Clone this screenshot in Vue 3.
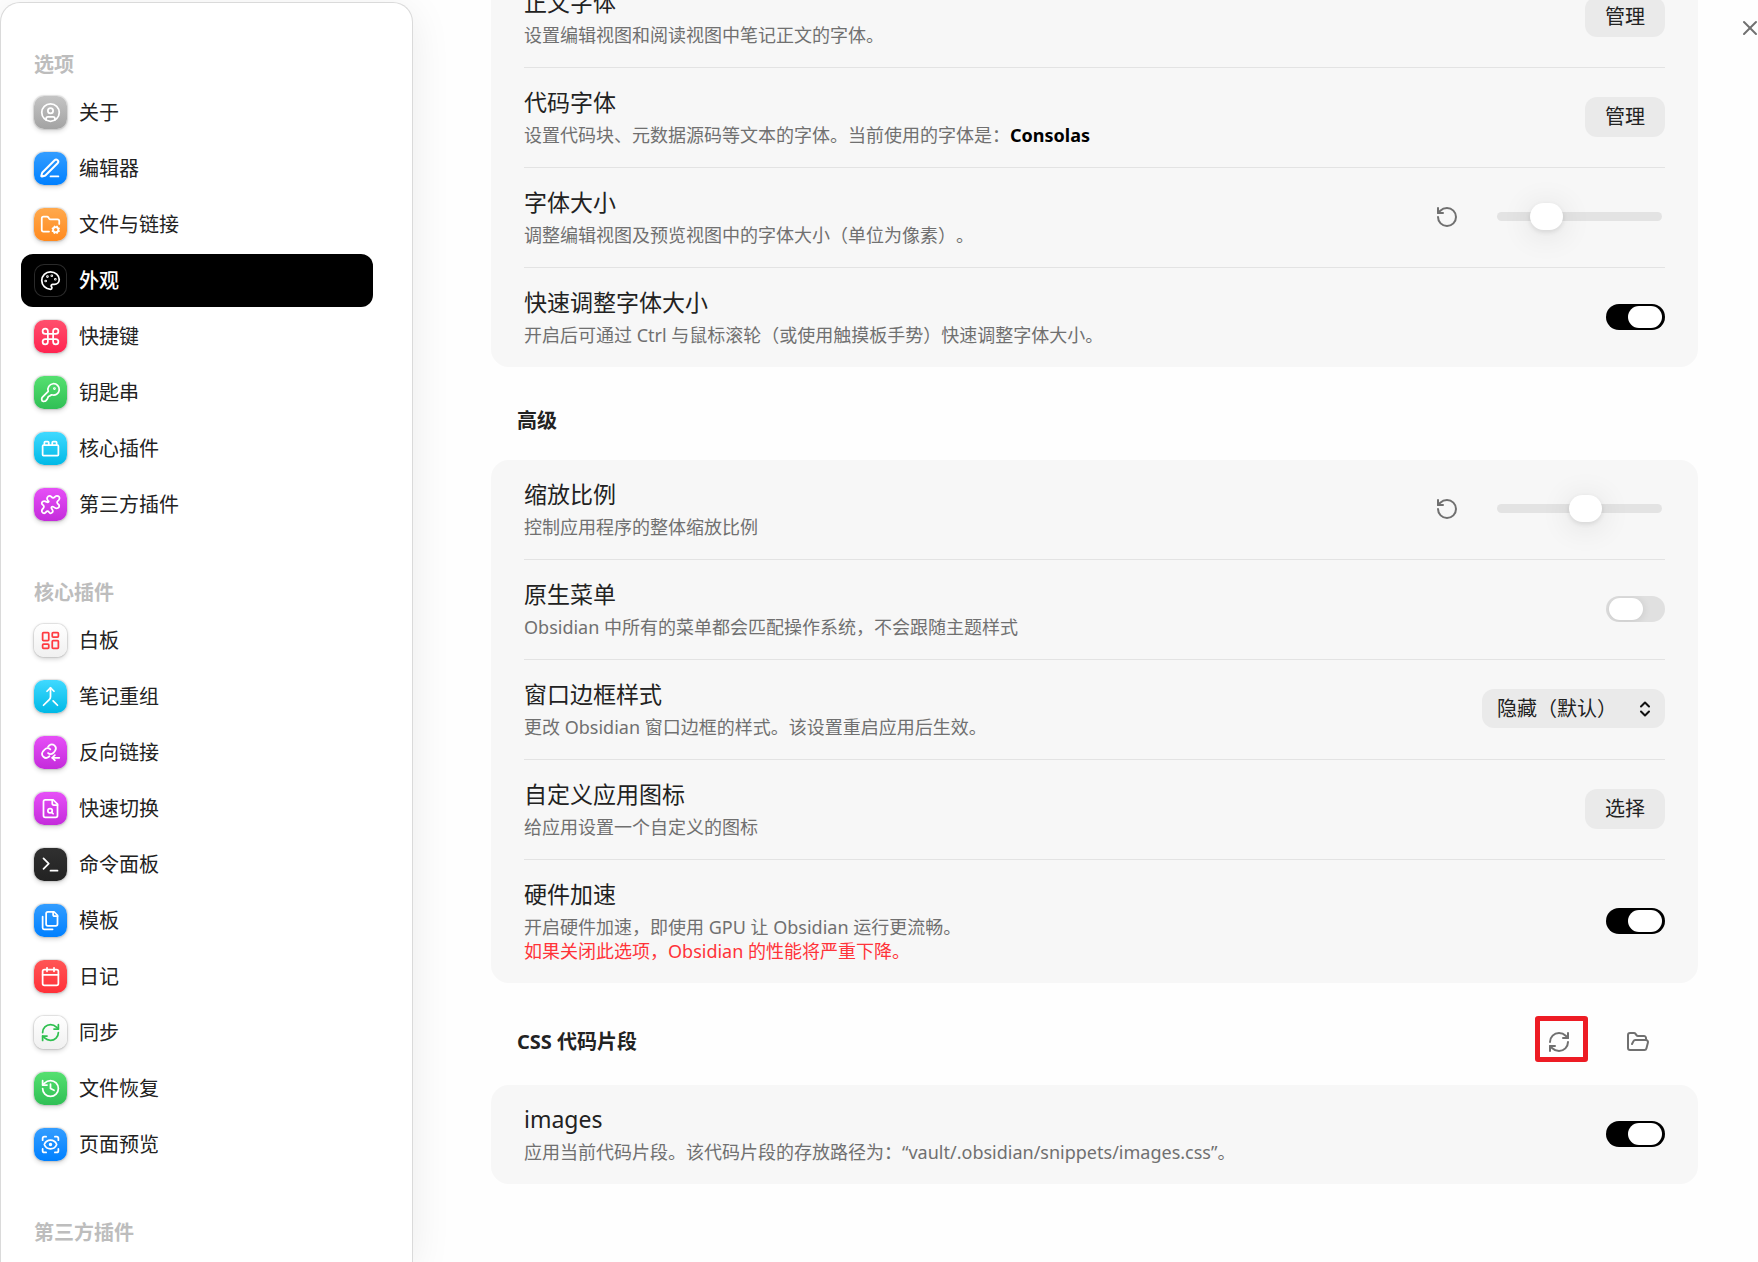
<script setup>
import { ref } from 'vue'

const icons = {
  user: '<circle cx="12" cy="12" r="10"/><circle cx="12" cy="10" r="3"/><path d="M7 20.662V19a2 2 0 0 1 2-2h6a2 2 0 0 1 2 2v1.662"/>',
  pen: '<path d="M12 21h9"/><path d="M16.376 3.622a1 1 0 0 1 3.002 3.002L7.368 18.635a2 2 0 0 1-.855.506l-2.872.838a.5.5 0 0 1-.62-.62l.838-2.872a2 2 0 0 1 .506-.854z" transform="translate(-2 -1.6) scale(1.14)"/>',
  folderCog: '<path d="M10.3 20H4a2 2 0 0 1-2-2V5a2 2 0 0 1 2-2h3.98a2 2 0 0 1 1.69.9l.66 1.2A2 2 0 0 0 12 6h8a2 2 0 0 1 2 2v3.3"/><circle cx="18" cy="18" r="3"/><path d="m14.305 19.53.923-.382M15.228 16.852l-.923-.383M16.852 15.228l-.383-.923M16.852 20.772l-.383.924M19.148 15.228l.383-.923M19.53 21.696l-.382-.924M20.772 16.852l.924-.383M20.772 19.148l.924.383"/>',
  palette: '<circle cx="13.5" cy="6.5" r=".5"/><circle cx="17.5" cy="10.5" r=".5"/><circle cx="8.5" cy="7.5" r=".5"/><circle cx="6.5" cy="12.5" r=".5"/><path d="M12 2C6.5 2 2 6.5 2 12s4.5 10 10 10c.926 0 1.648-.746 1.648-1.688 0-.437-.18-.835-.437-1.125-.29-.289-.438-.652-.438-1.125a1.64 1.64 0 0 1 1.668-1.668h1.996c3.051 0 5.555-2.503 5.555-5.554C21.965 6.012 17.461 2 12 2z"/>',
  command: '<path d="M15 6v12a3 3 0 1 0 3-3H6a3 3 0 1 0 3 3V6a3 3 0 1 0-3 3h12a3 3 0 1 0-3-3"/>',
  key: '<path d="M9.4 10.6 2.8 17.2A2.6 2.6 0 0 0 2 19v1.4A1.6 1.6 0 0 0 3.6 22H5a2.6 2.6 0 0 0 1.8-.8l1.4-1.6c.8-.9.6-1.9 1.2-2.6.7-.9 1.9-.9 2.7-1.7l1.3-.7a6.5 6.5 0 1 0-4-4z"/><circle cx="16.5" cy="7.5" r=".6"/>',
  brick: '<rect x="3" y="8" width="18" height="12" rx="1"/><path d="M10 8V5c0-.6-.4-1-1-1H6a1 1 0 0 0-1 1v3"/><path d="M19 8V5c0-.6-.4-1-1-1h-3a1 1 0 0 0-1 1v3"/>',
  puzzle: '<path d="M9 7.5C6.8 4.8 9 2 11 2s2.2 2.4 4 2.4S17.3 2 19.3 2 23 3.8 22 6s-3 2-2.4 4 2.4 1.6 2.4 3.6-2.6 3.4-4.6 2.4-2.6-2.6-4-1.2.8 2.6 1.2 4.2S13.6 22 12 22s-1.6-2.4-3.4-2.4S6.8 22 4.8 22 1.4 20 2.4 18s2.4-2 2-4S2 12.4 2 10.6 4 7.6 6 8.4s2.6 1.6 3.6.8 0-1-.6-1.7z"/>',
  dashboard: '<rect width="7" height="9" x="3" y="3" rx="1"/><rect width="7" height="5" x="14" y="3" rx="1"/><rect width="7" height="9" x="14" y="12" rx="1"/><rect width="7" height="5" x="3" y="16" rx="1"/>',
  merge: '<path d="m8 6 4-4 4 4"/><path d="M12 2v10.3a4 4 0 0 1-1.172 2.872L4 22"/><path d="m20 22-5-5"/>',
  backlink: '<path d="M9.2 12.6a4.4 4.4 0 0 0 6.4-.4l1.8-2.4a4.6 4.6 0 0 0-6.8-6L9.2 5.4"/><path d="M11.8 8.4a4.4 4.4 0 0 0-6.4.2l-2.2 2.4a4.6 4.6 0 0 0 6.6 6.2l1-1"/><path d="M22 18h-8"/><path d="m17 15-3 3 3 3"/>',
  fileSearch: '<path d="M15 2H6a2 2 0 0 0-2 2v16a2 2 0 0 0 2 2h12a2 2 0 0 0 2-2V7Z"/><path d="M14 2v4a2 2 0 0 0 2 2h4"/><circle cx="11.5" cy="14.5" r="2.5"/><path d="M13.3 16.3 15 18"/>',
  terminal: '<path d="m4 17 6-6-6-6"/><path d="M12 19h8"/>',
  files: '<path d="M20 7h-3a2 2 0 0 1-2-2V2"/><path d="M9 18a2 2 0 0 1-2-2V4a2 2 0 0 1 2-2h7l4 4v10a2 2 0 0 1-2 2Z"/><path d="M3 7.6v12.8A1.6 1.6 0 0 0 4.6 22h9.8"/>',
  calendar: '<rect width="18" height="18" x="3" y="4" rx="2"/><path d="M8 2v4"/><path d="M16 2v4"/><path d="M3 10h18"/>',
  refresh: '<path d="M3 12a9 9 0 0 1 9-9 9.75 9.75 0 0 1 6.74 2.74L21 8"/><path d="M21 3v5h-5"/><path d="M21 12a9 9 0 0 1-9 9 9.75 9.75 0 0 1-6.74-2.74L3 16"/><path d="M8 16H3v5"/>',
  history: '<path d="M3 12a9 9 0 1 0 9-9 9.75 9.75 0 0 0-6.74 2.74L3 8"/><path d="M3 3v5h5"/><path d="M12 7v5l4 2"/>',
  scanEye: '<path d="M3 7V5a2 2 0 0 1 2-2h2"/><path d="M17 3h2a2 2 0 0 1 2 2v2"/><path d="M21 17v2a2 2 0 0 1-2 2h-2"/><path d="M7 21H5a2 2 0 0 1-2-2v-2"/><circle cx="12" cy="12" r="1"/><path d="M18.944 12.33a1 1 0 0 0 0-.66 7.5 7.5 0 0 0-13.888 0 1 1 0 0 0 0 .66 7.5 7.5 0 0 0 13.888 0"/>',
  reset: '<path d="M3 12a9 9 0 1 0 9-9 9.75 9.75 0 0 0-6.74 2.74L3 8"/><path d="M3 3v5h5"/>',
  folderOpen: '<path d="m6 14 1.5-2.9A2 2 0 0 1 9.24 10H20a2 2 0 0 1 1.94 2.5l-1.54 6a2 2 0 0 1-1.95 1.5H4a2 2 0 0 1-2-2V5a2 2 0 0 1 2-2h3.9a2 2 0 0 1 1.69.9l.81 1.2a2 2 0 0 0 1.67.9H18a2 2 0 0 1 2 2v2"/>',
  close: '<path d="M18 6 6 18"/><path d="m6 6 12 12"/>',
}

const groups = [
  {
    title: '选项',
    items: [
      { label: '关于', icon: 'user', tone: 'gray' },
      { label: '编辑器', icon: 'pen', tone: 'blue' },
      { label: '文件与链接', icon: 'folderCog', tone: 'orange' },
      { label: '外观', icon: 'palette', tone: 'black' },
      { label: '快捷键', icon: 'command', tone: 'pink' },
      { label: '钥匙串', icon: 'key', tone: 'green' },
      { label: '核心插件', icon: 'brick', tone: 'cyan' },
      { label: '第三方插件', icon: 'puzzle', tone: 'purple' },
    ],
  },
  {
    title: '核心插件',
    items: [
      { label: '白板', icon: 'dashboard', tone: 'white-red' },
      { label: '笔记重组', icon: 'merge', tone: 'cyan' },
      { label: '反向链接', icon: 'backlink', tone: 'purple' },
      { label: '快速切换', icon: 'fileSearch', tone: 'purple' },
      { label: '命令面板', icon: 'terminal', tone: 'dark' },
      { label: '模板', icon: 'files', tone: 'blue' },
      { label: '日记', icon: 'calendar', tone: 'red' },
      { label: '同步', icon: 'refresh', tone: 'white-green' },
      { label: '文件恢复', icon: 'history', tone: 'green' },
      { label: '页面预览', icon: 'scanEye', tone: 'blue' },
    ],
  },
  { title: '第三方插件', items: [] },
]

const active = ref('外观')
const fontSize = ref(15)
const quickResize = ref(true)
const zoom = ref(110)
const nativeMenus = ref(false)
const frameStyle = ref('hidden')
const hardware = ref(true)
const snippetImages = ref(true)
</script>

<template>
  <div class="settings">
    <nav class="sidebar" aria-label="设置">
      <section v-for="group in groups" :key="group.title" class="group">
        <h2 class="group-title">{{ group.title }}</h2>
        <button
          v-for="item in group.items"
          :key="item.label"
          type="button"
          class="nav-item"
          :class="{ active: item.label === active }"
          @click="active = item.label"
        >
          <span class="tile" :class="item.tone">
            <svg class="icon" viewBox="0 0 24 24" aria-hidden="true" v-html="icons[item.icon]"></svg>
          </span>
          <span>{{ item.label }}</span>
        </button>
      </section>
    </nav>

    <main class="content">
      <section class="card first">
        <div class="row">
          <div class="info">
            <div class="name">正文字体</div>
            <div class="desc">设置编辑视图和阅读视图中笔记正文的字体。</div>
          </div>
          <button type="button" class="btn">管理</button>
        </div>
        <div class="row">
          <div class="info">
            <div class="name">代码字体</div>
            <div class="desc">设置代码块、元数据源码等文本的字体。当前使用的字体是：<strong>Consolas</strong></div>
          </div>
          <button type="button" class="btn">管理</button>
        </div>
        <div class="row">
          <div class="info">
            <label class="name" for="font-size">字体大小</label>
            <div class="desc">调整编辑视图及预览视图中的字体大小（单位为像素）。</div>
          </div>
          <div class="slider-control">
            <button type="button" class="icon-btn" aria-label="恢复默认" @click="fontSize = 15">
              <svg class="icon" viewBox="0 0 24 24" aria-hidden="true" v-html="icons.reset"></svg>
            </button>
            <input id="font-size" v-model.number="fontSize" class="slider" type="range" min="10" max="30" />
          </div>
        </div>
        <div class="row">
          <div class="info">
            <label class="name" for="quick-resize">快速调整字体大小</label>
            <div class="desc">开启后可通过 Ctrl 与鼠标滚轮（或使用触摸板手势）快速调整字体大小。</div>
          </div>
          <input id="quick-resize" v-model="quickResize" class="toggle" type="checkbox" />
        </div>
      </section>

      <header class="section-head">
        <h3>高级</h3>
      </header>
      <section class="card">
        <div class="row">
          <div class="info">
            <label class="name" for="zoom">缩放比例</label>
            <div class="desc">控制应用程序的整体缩放比例</div>
          </div>
          <div class="slider-control">
            <button type="button" class="icon-btn" aria-label="恢复默认" @click="zoom = 110">
              <svg class="icon" viewBox="0 0 24 24" aria-hidden="true" v-html="icons.reset"></svg>
            </button>
            <input id="zoom" v-model.number="zoom" class="slider" type="range" min="50" max="160" />
          </div>
        </div>
        <div class="row">
          <div class="info">
            <label class="name" for="native-menus">原生菜单</label>
            <div class="desc">Obsidian 中所有的菜单都会匹配操作系统，不会跟随主题样式</div>
          </div>
          <input id="native-menus" v-model="nativeMenus" class="toggle" type="checkbox" />
        </div>
        <div class="row">
          <div class="info">
            <label class="name" for="frame-style">窗口边框样式</label>
            <div class="desc">更改 Obsidian 窗口边框的样式。该设置重启应用后生效。</div>
          </div>
          <div class="select-wrap">
            <select id="frame-style" v-model="frameStyle" class="select">
              <option value="hidden">隐藏（默认）</option>
            </select>
            <svg class="chevrons" viewBox="0 0 12 16" aria-hidden="true">
              <path d="M2 5.5 6 1.5 10 5.5M2 10.5 6 14.5 10 10.5" />
            </svg>
          </div>
        </div>
        <div class="row">
          <div class="info">
            <div class="name">自定义应用图标</div>
            <div class="desc">给应用设置一个自定义的图标</div>
          </div>
          <button type="button" class="btn">选择</button>
        </div>
        <div class="row">
          <div class="info">
            <label class="name" for="hardware">硬件加速</label>
            <div class="desc">开启硬件加速，即使用 GPU 让 Obsidian 运行更流畅。</div>
            <div class="desc warning">如果关闭此选项，Obsidian 的性能将严重下降。</div>
          </div>
          <input id="hardware" v-model="hardware" class="toggle" type="checkbox" />
        </div>
      </section>

      <header class="section-head">
        <h3>CSS 代码片段</h3>
        <div class="actions">
          <button type="button" class="icon-btn marked" aria-label="重新加载代码片段">
            <svg class="icon" viewBox="0 0 24 24" aria-hidden="true" v-html="icons.refresh"></svg>
          </button>
          <button type="button" class="icon-btn" aria-label="打开代码片段文件夹">
            <svg class="icon" viewBox="0 0 24 24" aria-hidden="true" v-html="icons.folderOpen"></svg>
          </button>
        </div>
      </header>
      <section class="card">
        <div class="row">
          <div class="info">
            <label class="name" for="snippet-images">images</label>
            <div class="desc">应用当前代码片段。该代码片段的存放路径为：“vault/.obsidian/snippets/images.css”。</div>
          </div>
          <input id="snippet-images" v-model="snippetImages" class="toggle" type="checkbox" />
        </div>
      </section>
    </main>

    <button type="button" class="close" aria-label="关闭">
      <svg class="icon" viewBox="0 0 24 24" aria-hidden="true" v-html="icons.close"></svg>
    </button>
  </div>
</template>

<style>
body {
  margin: 0;
  background: #fff;
}
</style>

<style scoped>
.settings {
  position: relative;
  display: flex;
  height: 100vh;
  overflow: hidden;
  box-sizing: border-box;
  padding-top: 2px;
  background: #fefefe;
  color: #222;
  font-family: "Noto Sans", "Noto Sans CJK SC", sans-serif;
  font-size: 20px;
  line-height: 28px;
  text-spacing-trim: space-all;
}

button,
select {
  border: 0;
  margin: 0;
  padding: 0;
  background: none;
  color: inherit;
  font: inherit;
}

.icon {
  display: block;
  width: 24px;
  height: 24px;
  fill: none;
  stroke: currentColor;
  stroke-width: 2;
  stroke-linecap: round;
  stroke-linejoin: round;
}

/* Sidebar */
.sidebar {
  flex: 0 0 413px;
  box-sizing: border-box;
  padding: 0 39px 0 20px;
  border: 1px solid #dadada;
  border-bottom: 0;
  border-radius: 20px 20px 0 0;
  background: #fff;
  box-shadow: 0 8px 40px rgba(0, 0, 0, 0.08);
}

.group {
  display: flex;
  flex-direction: column;
  gap: 3px;
  margin-top: 48px;
}

.group-title {
  margin: 0 0 4px 13px;
  color: #bdbdbd;
  font-size: 20px;
  font-weight: 700;
  line-height: 28px;
}

.nav-item {
  display: flex;
  align-items: center;
  gap: 12px;
  height: 53px;
  padding-left: 13px;
  border-radius: 12px;
  text-align: left;
}

.nav-item.active {
  background: #000;
  color: #fff;
  font-weight: 500;
}

.tile {
  display: grid;
  place-items: center;
  width: 33px;
  height: 33px;
  border-radius: 10px;
  color: #fff;
  box-shadow: 0 0 1px 1px rgba(0, 0, 0, 0.1), 0 2px 5px rgba(0, 0, 0, 0.18);
}

.tile .icon {
  width: 21px;
  height: 21px;
}

.gray { background: linear-gradient(#c4c4c4, #a3a3a3); }
.blue { background: linear-gradient(#339dff, #0080ff); }
.orange { background: linear-gradient(#ffa94d, #ff8a1f); }
.black { background: #000; box-shadow: inset 0 0 0 1px #2a2a2a; }
.pink { background: linear-gradient(#ff4f6d, #ff2450); }
.green { background: linear-gradient(#55e070, #30bf55); }
.cyan { background: linear-gradient(#40d9ff, #00b9e6); }
.purple { background: linear-gradient(#e64ff7, #c42bdb); }
.dark { background: linear-gradient(#303030, #222); }
.red { background: linear-gradient(#ff5555, #ff3038); }
.white-red { background: linear-gradient(#fff, #f0f0f0); color: #ff3b41; }
.white-green { background: linear-gradient(#fff, #f0f0f0); color: #30c050; }

/* Content */
.content {
  flex: 1;
  min-width: 0;
  padding: 0 60px 0 78px;
}

.card {
  padding: 0 33px;
  border-radius: 18px;
  background: #f7f7f7;
}

.card.first {
  margin-top: -34px;
}

.row {
  display: flex;
  align-items: center;
  justify-content: space-between;
  gap: 24px;
  padding: 18px 0 20px;
  border-bottom: 1px solid #e3e3e3;
}

.row:last-child {
  border-bottom: 0;
}

.info {
  min-width: 0;
}

.name {
  display: block;
  margin-bottom: 5px;
  font-size: 23px;
  line-height: 32px;
}

.desc {
  color: #707070;
  font-size: 18px;
  line-height: 24px;
}

.desc strong {
  color: #000;
  font-weight: 700;
}

.desc.warning {
  color: #ff3339;
}

.section-head {
  display: flex;
  align-items: center;
  justify-content: space-between;
  padding: 40px 36px 25px 26px;
}

.section-head h3 {
  margin: 0;
  font-size: 20px;
  font-weight: 700;
  line-height: 28px;
}

.actions {
  display: flex;
  gap: 31px;
}

.btn {
  flex: none;
  height: 40px;
  padding: 0 20px;
  border-radius: 12px;
  background: #eaeaea;
}

.icon-btn {
  position: relative;
  display: grid;
  place-items: center;
  width: 48px;
  height: 37px;
  color: #707070;
}

.marked::after {
  content: "";
  position: absolute;
  top: -7px;
  left: 0;
  width: 43px;
  height: 36px;
  border: 5px solid #ed1c24;
  border-radius: 3px;
}

.slider-control {
  display: flex;
  flex: none;
  align-items: center;
  gap: 26px;
  padding-right: 3px;
}

.slider {
  appearance: none;
  width: 165px;
  height: 9px;
  margin: 0;
  border-radius: 5px;
  background: #e3e3e3;
}

.slider::-webkit-slider-thumb {
  appearance: none;
  width: 33px;
  height: 27px;
  border-radius: 14px;
  background: #fff;
  box-shadow: 0 2px 5px rgba(0, 0, 0, 0.1), 0 4px 32px rgba(0, 0, 0, 0.12);
}

.toggle {
  appearance: none;
  flex: none;
  box-sizing: border-box;
  width: 59px;
  height: 26px;
  margin: 0;
  padding: 2px 3px;
  overflow: hidden;
  border-radius: 13px;
  background: #e0e0e0;
}

.toggle::before {
  content: "";
  display: block;
  width: 34px;
  height: 22px;
  border-radius: 11px;
  background: #fff;
  box-shadow: 0 1px 8px rgba(0, 0, 0, 0.12);
}

.toggle:checked {
  background: #000;
}

.toggle:checked::before {
  margin-left: auto;
}

.select-wrap {
  position: relative;
  flex: none;
}

.select {
  appearance: none;
  display: block;
  height: 39px;
  padding: 0 48px 0 15px;
  border-radius: 12px;
  background: #eaeaea;
}

.chevrons {
  position: absolute;
  top: 12px;
  right: 14px;
  width: 12px;
  height: 16px;
  fill: none;
  stroke: #111;
  stroke-width: 2;
  stroke-linecap: round;
  stroke-linejoin: round;
  pointer-events: none;
}

.close {
  position: absolute;
  top: 16px;
  right: -4px;
  color: #707070;
}
</style>
